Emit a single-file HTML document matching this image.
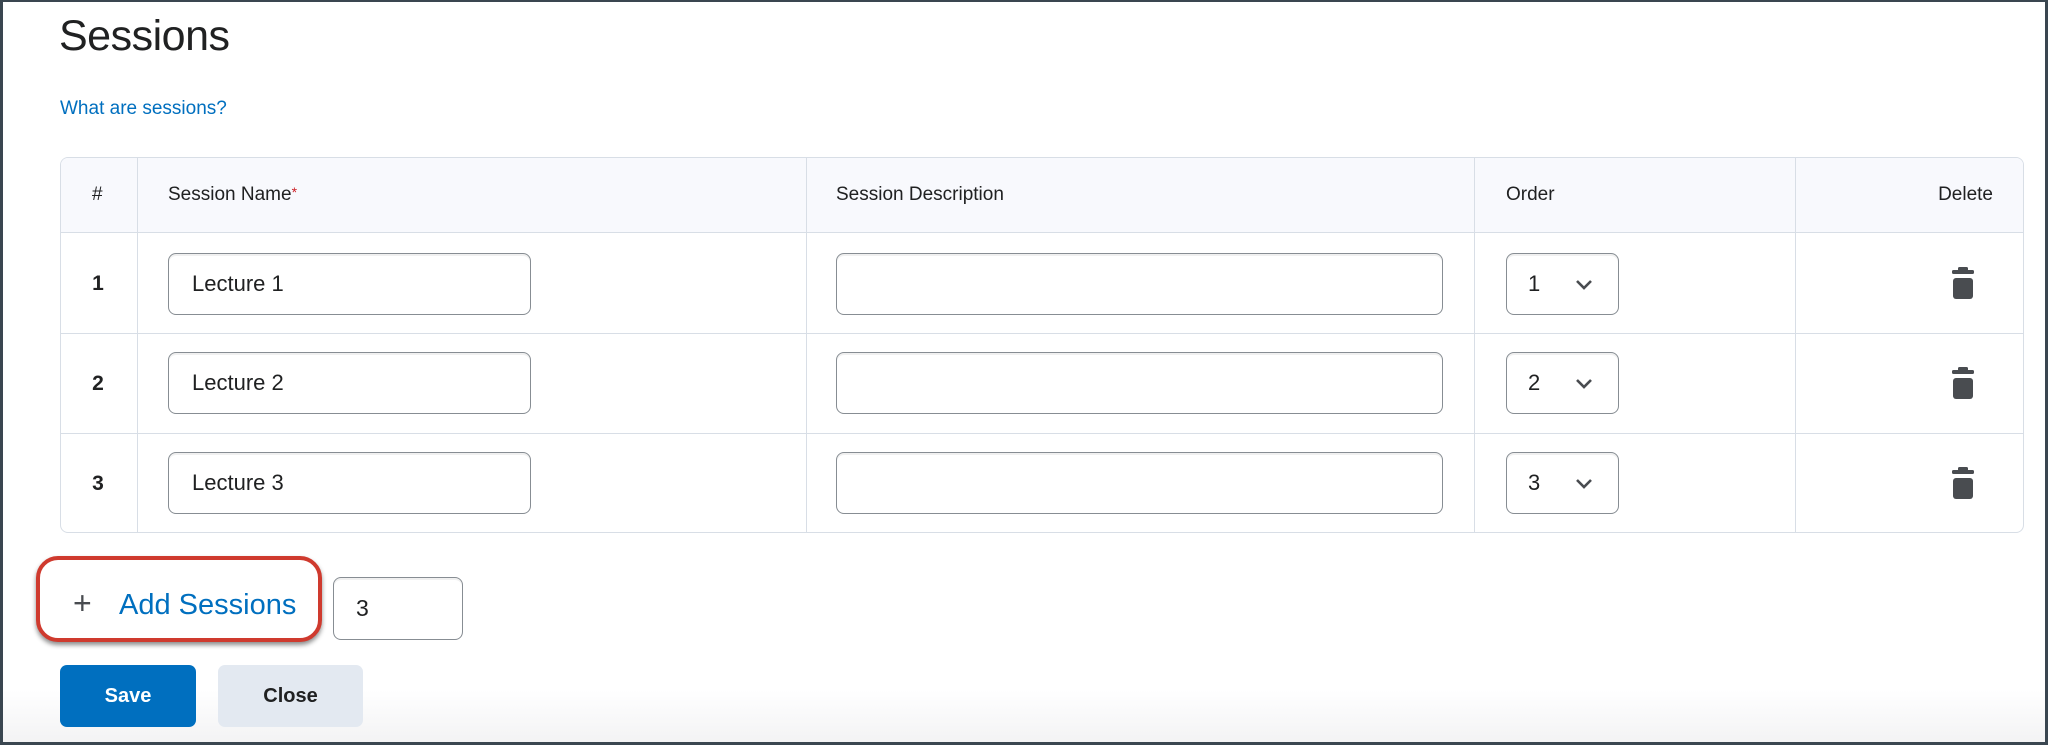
<!DOCTYPE html>
<html><head><meta charset="utf-8"><style>
*{box-sizing:border-box;margin:0;padding:0}
body{width:2048px;height:745px;overflow:hidden;background:#fff;font-family:"Liberation Sans",sans-serif;color:#202122;position:relative}
.frame{position:absolute;left:0;top:0;width:2048px;height:745px;box-shadow:inset 3px 2px 0 #3a4650,inset -3px -3px 0 #3a4650;background:linear-gradient(#fff 0,#fff 690px,#f3f3f4 742px)}
.a{position:absolute}
h1{position:absolute;left:59px;top:12px;font-size:43px;font-weight:normal;color:#202122;letter-spacing:-0.5px}
.link{left:60px;top:98px;font-size:19px;color:#006fbf}
.tbl{left:60px;top:157px;width:1964px;height:376px;border:1px solid #d8dee6;border-radius:8px;overflow:hidden}
.hdr{left:0;top:0;width:100%;height:75px;background:#f8f9fd;border-bottom:1px solid #d8dee6}
.hl{position:absolute;top:0;height:100%;width:1px;background:#d8dee6}
.rl{position:absolute;left:0;width:100%;height:1px;background:#d8dee6}
.ht{position:absolute;top:26px;font-size:19px;color:#202122}
.num{position:absolute;left:30px;font-size:21px;font-weight:bold;width:14px;text-align:center}
.inp{position:absolute;border:1px solid #878d93;border-radius:8px;background:#fff;box-shadow:inset 0 2px 0 #f0f0f0;font-size:22px;padding-left:23px;line-height:60px}
.tr{position:absolute;left:1890px}
.btn{position:absolute;top:665px;height:62px;border-radius:7px;font-weight:bold;font-size:20px;text-align:center;line-height:62px}
</style></head><body><div class="frame"></div>
<h1>Sessions</h1>
<div class="a link">What are sessions?</div>
<div class="a tbl">
 <div class="a hdr"></div>
 <div class="hl" style="left:76px"></div><div class="hl" style="left:745px"></div><div class="hl" style="left:1413px"></div><div class="hl" style="left:1734px"></div>
 <div class="rl" style="top:175px"></div><div class="rl" style="top:275px"></div>
 <div class="ht" style="left:31px">#</div>
 <div class="ht" style="left:107px">Session Name<span style="color:#cd2026;font-size:14px;vertical-align:top">*</span></div>
 <div class="ht" style="left:775px">Session Description</div>
 <div class="ht" style="left:1445px">Order</div>
 <div class="ht" style="right:30px">Delete</div>
 <div class="num" style="top:114px">1</div><div class="num" style="top:214px">2</div><div class="num" style="top:314px">3</div>
 <div class="inp" style="left:107px;top:95px;width:363px;height:62px">Lecture 1</div>
 <div class="inp" style="left:107px;top:194px;width:363px;height:62px">Lecture 2</div>
 <div class="inp" style="left:107px;top:294px;width:363px;height:62px">Lecture 3</div>
 <div class="inp" style="left:775px;top:95px;width:607px;height:62px"></div>
 <div class="inp" style="left:775px;top:194px;width:607px;height:62px"></div>
 <div class="inp" style="left:775px;top:294px;width:607px;height:62px"></div>
 <div class="inp" style="left:1445px;top:95px;width:113px;height:62px;padding-left:21px">1<svg style="position:absolute;left:68px;top:25px" width="18" height="12" viewBox="0 0 18 12"><path d="M2 2l7 7 7-7" fill="none" stroke="#494c50" stroke-width="2.6"/></svg></div>
 <div class="inp" style="left:1445px;top:194px;width:113px;height:62px;padding-left:21px">2<svg style="position:absolute;left:68px;top:25px" width="18" height="12" viewBox="0 0 18 12"><path d="M2 2l7 7 7-7" fill="none" stroke="#494c50" stroke-width="2.6"/></svg></div>
 <div class="inp" style="left:1445px;top:294px;width:113px;height:62px;padding-left:21px">3<svg style="position:absolute;left:68px;top:25px" width="18" height="12" viewBox="0 0 18 12"><path d="M2 2l7 7 7-7" fill="none" stroke="#494c50" stroke-width="2.6"/></svg></div>
 <svg class="tr" style="top:109px" width="24" height="34" viewBox="0 0 24 34"><rect x="7" y="0" width="10" height="4" rx="1.5" fill="#494c50"/><rect x="1" y="3" width="22" height="4" rx="1.5" fill="#494c50"/><rect x="2" y="11" width="20" height="21" rx="3" fill="#494c50"/></svg>
 <svg class="tr" style="top:209px" width="24" height="34" viewBox="0 0 24 34"><rect x="7" y="0" width="10" height="4" rx="1.5" fill="#494c50"/><rect x="1" y="3" width="22" height="4" rx="1.5" fill="#494c50"/><rect x="2" y="11" width="20" height="21" rx="3" fill="#494c50"/></svg>
 <svg class="tr" style="top:309px" width="24" height="34" viewBox="0 0 24 34"><rect x="7" y="0" width="10" height="4" rx="1.5" fill="#494c50"/><rect x="1" y="3" width="22" height="4" rx="1.5" fill="#494c50"/><rect x="2" y="11" width="20" height="21" rx="3" fill="#494c50"/></svg>
</div>
<div class="a" style="left:36px;top:556px;width:286px;height:86px;border:4px solid #cf3a2e;border-radius:22px;box-shadow:0 3px 5px rgba(0,0,0,.45);background:#fff"></div>
<div class="a" style="left:73px;top:585px;font-size:32px;color:#494c50">+</div>
<div class="a" style="left:119px;top:589px;font-size:29px;color:#006fbf">Add Sessions</div>
<div class="inp" style="left:333px;top:577px;width:130px;height:63px;padding-left:22px;font-size:23px">3</div>
<div class="btn" style="left:60px;width:136px;background:#006fbf;color:#fff">Save</div>
<div class="btn" style="left:218px;width:145px;background:#e3e9f1;color:#202122">Close</div>
</body></html>
